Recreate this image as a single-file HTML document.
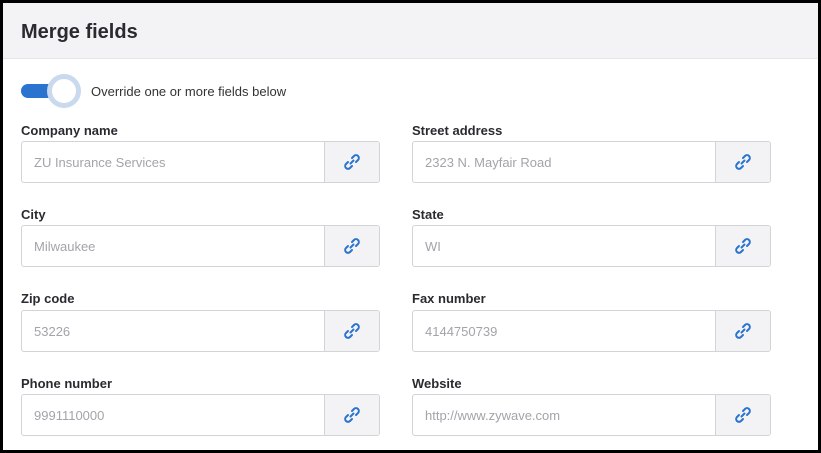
<!DOCTYPE html><html><head><style>
*{box-sizing:border-box;margin:0;padding:0}
body{width:821px;height:453px;background:#000;font-family:"Liberation Sans",sans-serif;position:relative;overflow:hidden}
.panel{position:absolute;left:3px;top:3px;width:815px;height:447px;background:#fff}
.hdr{position:absolute;left:0;top:0;width:815px;height:56px;background:#f3f3f5;border-bottom:1px solid #e6e6ea}
.hdr h1{position:absolute;left:18px;top:18px;font-size:20px;font-weight:bold;color:#2a2a30}
.track{position:absolute;left:18px;top:81px;width:40px;height:14px;border-radius:7px;background:#2a74cf}
.knob{position:absolute;left:44px;top:71px;width:34px;height:34px;border-radius:50%;background:#fff;border:5px solid #c9d9ee}
.tl{position:absolute;left:88px;top:81px;font-size:13px;color:#333}
.lbl{position:absolute;font-size:13px;font-weight:bold;color:#2a2a30}
.inp{position:absolute;width:359px;height:42px;border:1px solid #d3d3d8;border-radius:3px;background:#fff;overflow:hidden}
.inp span{position:absolute;left:12px;top:13px;font-size:13px;color:#a3a3ab}
.btn{position:absolute;right:0;top:0;width:55px;height:40px;background:#f3f3f5;border-left:1px solid #d3d3d8}
.btn svg{position:absolute;left:18px;top:11px}
</style></head><body><div class="panel">
<div class="hdr"><h1>Merge fields</h1></div>
<div class="track"></div><div class="knob"></div>
<div class="tl">Override one or more fields below</div>

<div class="lbl" style="left:18px;top:120px">Company name</div>
<div class="inp" style="left:18px;top:138px"><span>ZU Insurance Services</span><div class="btn"><svg width="18" height="18" viewBox="0 0 18 18" fill="none" stroke="#2a74cf" stroke-width="2" stroke-linecap="round"><path d="M7.5 10.5 L10.5 7.5"/><path d="M9 5 L11 3 a2.8 2.8 0 0 1 4 4 L13 9"/><path d="M9 13 L7 15 a2.8 2.8 0 0 1 -4 -4 L5 9"/></svg></div></div>
<div class="lbl" style="left:409px;top:120px">Street address</div>
<div class="inp" style="left:409px;top:138px"><span>2323 N. Mayfair Road</span><div class="btn"><svg width="18" height="18" viewBox="0 0 18 18" fill="none" stroke="#2a74cf" stroke-width="2" stroke-linecap="round"><path d="M7.5 10.5 L10.5 7.5"/><path d="M9 5 L11 3 a2.8 2.8 0 0 1 4 4 L13 9"/><path d="M9 13 L7 15 a2.8 2.8 0 0 1 -4 -4 L5 9"/></svg></div></div>

<div class="lbl" style="left:18px;top:204px">City</div>
<div class="inp" style="left:18px;top:222px"><span>Milwaukee</span><div class="btn"><svg width="18" height="18" viewBox="0 0 18 18" fill="none" stroke="#2a74cf" stroke-width="2" stroke-linecap="round"><path d="M7.5 10.5 L10.5 7.5"/><path d="M9 5 L11 3 a2.8 2.8 0 0 1 4 4 L13 9"/><path d="M9 13 L7 15 a2.8 2.8 0 0 1 -4 -4 L5 9"/></svg></div></div>
<div class="lbl" style="left:409px;top:204px">State</div>
<div class="inp" style="left:409px;top:222px"><span>WI</span><div class="btn"><svg width="18" height="18" viewBox="0 0 18 18" fill="none" stroke="#2a74cf" stroke-width="2" stroke-linecap="round"><path d="M7.5 10.5 L10.5 7.5"/><path d="M9 5 L11 3 a2.8 2.8 0 0 1 4 4 L13 9"/><path d="M9 13 L7 15 a2.8 2.8 0 0 1 -4 -4 L5 9"/></svg></div></div>

<div class="lbl" style="left:18px;top:288px">Zip code</div>
<div class="inp" style="left:18px;top:307px"><span>53226</span><div class="btn"><svg width="18" height="18" viewBox="0 0 18 18" fill="none" stroke="#2a74cf" stroke-width="2" stroke-linecap="round"><path d="M7.5 10.5 L10.5 7.5"/><path d="M9 5 L11 3 a2.8 2.8 0 0 1 4 4 L13 9"/><path d="M9 13 L7 15 a2.8 2.8 0 0 1 -4 -4 L5 9"/></svg></div></div>
<div class="lbl" style="left:409px;top:288px">Fax number</div>
<div class="inp" style="left:409px;top:307px"><span>4144750739</span><div class="btn"><svg width="18" height="18" viewBox="0 0 18 18" fill="none" stroke="#2a74cf" stroke-width="2" stroke-linecap="round"><path d="M7.5 10.5 L10.5 7.5"/><path d="M9 5 L11 3 a2.8 2.8 0 0 1 4 4 L13 9"/><path d="M9 13 L7 15 a2.8 2.8 0 0 1 -4 -4 L5 9"/></svg></div></div>

<div class="lbl" style="left:18px;top:373px">Phone number</div>
<div class="inp" style="left:18px;top:391px"><span>9991110000</span><div class="btn"><svg width="18" height="18" viewBox="0 0 18 18" fill="none" stroke="#2a74cf" stroke-width="2" stroke-linecap="round"><path d="M7.5 10.5 L10.5 7.5"/><path d="M9 5 L11 3 a2.8 2.8 0 0 1 4 4 L13 9"/><path d="M9 13 L7 15 a2.8 2.8 0 0 1 -4 -4 L5 9"/></svg></div></div>
<div class="lbl" style="left:409px;top:373px">Website</div>
<div class="inp" style="left:409px;top:391px"><span>http://www.zywave.com</span><div class="btn"><svg width="18" height="18" viewBox="0 0 18 18" fill="none" stroke="#2a74cf" stroke-width="2" stroke-linecap="round"><path d="M7.5 10.5 L10.5 7.5"/><path d="M9 5 L11 3 a2.8 2.8 0 0 1 4 4 L13 9"/><path d="M9 13 L7 15 a2.8 2.8 0 0 1 -4 -4 L5 9"/></svg></div></div>
</div></body></html>
